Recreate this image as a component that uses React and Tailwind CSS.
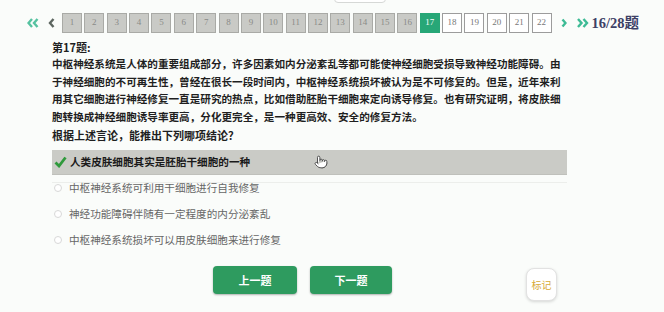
import { Pointer } from 'lucide-react';

const cjk = { fontFamily: '"Noto Sans CJK SC", "Noto Sans", sans-serif' };
const serif = { fontFamily: '"Liberation Serif", "DejaVu Serif", serif' };

const lines = [
  '中枢神经系统是人体的重要组成部分，许多因素如内分泌紊乱等都可能使神经细胞受损导致神经功能障碍。由',
  '于神经细胞的不可再生性，曾经在很长一段时间内，中枢神经系统损坏被认为是不可修复的。但是，近年来利',
  '用其它细胞进行神经修复一直是研究的热点，比如借助胚胎干细胞来定向诱导修复。也有研究证明，将皮肤细',
  '胞转换成神经细胞诱导率更高，分化更完全，是一种更高效、安全的修复方法。',
];

const options = [
  '中枢神经系统可利用干细胞进行自我修复',
  '神经功能障碍伴随有一定程度的内分泌紊乱',
  '中枢神经系统损坏可以用皮肤细胞来进行修复',
];

function PageBox({ n }) {
  let cls = 'bg-[#c9cac6] border-[#a9aaa6] text-[#8a8b88]';
  if (n === 17) cls = 'bg-[#27a777] border-[#27a777] text-white';
  else if (n > 17) cls = 'bg-white border-[#9c9c9c] text-[#777]';
  return (
    <div
      className={`w-[20px] h-[20px] border flex items-center justify-center text-[9px] ${cls}`}
      style={serif}
    >
      {n}
    </div>
  );
}

export default function App() {
  const pages = Array.from({ length: 22 }, (_, i) => i + 1);

  return (
    <div className="w-[664px] h-[312px] bg-[#fafcfa] overflow-hidden relative" style={cjk}>
      {/* top fragment */}
      <div className="absolute left-[334px] top-[-6px] w-[52px] h-[9px] border border-[#d6d8d6] bg-white rounded-sm" />

      {/* Pagination */}
      <div className="flex items-center pl-[27px] pt-[13px] h-[33px]">
        <svg width="12" height="10" viewBox="0 0 12 10" className="mr-[9px]">
          <path d="M5 1 L1.5 5 L5 9 M10.5 1 L7 5 L10.5 9" fill="none" stroke="#55c2a0" strokeWidth="2.4" />
        </svg>
        <svg width="7" height="10" viewBox="0 0 7 10" className="mr-[7px]">
          <path d="M5.5 1 L2 5 L5.5 9" fill="none" stroke="#5d6660" strokeWidth="2.4" />
        </svg>
        <div className="flex gap-[2.36px]">
          {pages.map((n) => (
            <PageBox key={n} n={n} />
          ))}
        </div>
        <svg width="6" height="10" viewBox="0 0 6 10" className="ml-[9px]">
          <path d="M1.5 1.5 L4.5 5 L1.5 8.5" fill="none" stroke="#3dbb95" strokeWidth="2.4" />
        </svg>
        <svg width="13" height="10" viewBox="0 0 13 10" className="ml-[9px]">
          <path d="M2 1 L5.5 5 L2 9 M7.5 1 L11 5 L7.5 9" fill="none" stroke="#3dbb95" strokeWidth="2.4" />
        </svg>
        <span className="ml-[3px] text-[14.5px] font-bold text-[#3d4166]" style={serif}>
          16/28<span style={cjk}>题</span>
        </span>
      </div>

      {/* Question */}
      <div className="pl-[52px] text-[#1f1f1f]">
        <div className="mt-[7px] text-[11px] leading-[14px] font-bold">第17题:</div>
        <div className="mt-[1px] text-[10.6px] leading-[17.7px] font-bold">
          {lines.map((l) => (
            <div key={l} className="whitespace-nowrap">{l}</div>
          ))}
        </div>
        <div className="mt-[2px] text-[11px] leading-[14px] font-bold">根据上述言论，能推出下列哪项结论？</div>

        <div className="w-[515px] mt-[8px]">
          <div className="relative h-[25px] bg-[#cacbc6] flex items-center pl-[2px] border-b border-[#bfc0bb]">
            <svg width="13" height="12" viewBox="0 0 13 12">
              <path d="M1.5 6.5 L5 10 L11.5 1.5" fill="none" stroke="#2f9a3c" strokeWidth="2.8" />
            </svg>
            <span className="ml-[3px] text-[10.6px] font-bold text-[#1a1a1a]">人类皮肤细胞其实是胚胎干细胞的一种</span>
            <Pointer
              size={14}
              strokeWidth={1.4}
              className="absolute left-[262px] top-[5px] text-[#333] fill-white"
            />
          </div>
          <div className="h-[1px] bg-[#eceeeb] mt-[7px]" />
        </div>

        <div className="-mt-[8px]">
          {options.map((o) => (
            <div key={o} className="h-[26px] flex items-center">
              <div className="w-[8px] h-[8px] rounded-full border border-[#d8d8d8] bg-white ml-[2px]" />
              <span className="ml-[7px] text-[10.6px] text-[#666]">{o}</span>
            </div>
          ))}
        </div>
      </div>

      {/* Buttons */}
      <div className="flex items-start pl-[213px] mt-[13px]">
        <button className="w-[84px] h-[28px] rounded-[4px] bg-[#2e9b5f] text-white text-[11px] font-bold shadow-[0_1px_2px_rgba(0,0,0,0.3)]">
          上一题
        </button>
        <button className="ml-[13px] w-[82px] h-[28px] rounded-[4px] bg-[#2e9b5f] text-white text-[11px] font-bold shadow-[0_1px_2px_rgba(0,0,0,0.3)]">
          下一题
        </button>
        <button className="ml-[134px] mt-[2px] w-[31px] h-[33px] rounded-[8px] bg-white border border-[#e2e2e2] shadow-[0_1px_3px_rgba(0,0,0,0.15)] text-[#d7a935] text-[10px]">
          标记
        </button>
      </div>
    </div>
  );
}
